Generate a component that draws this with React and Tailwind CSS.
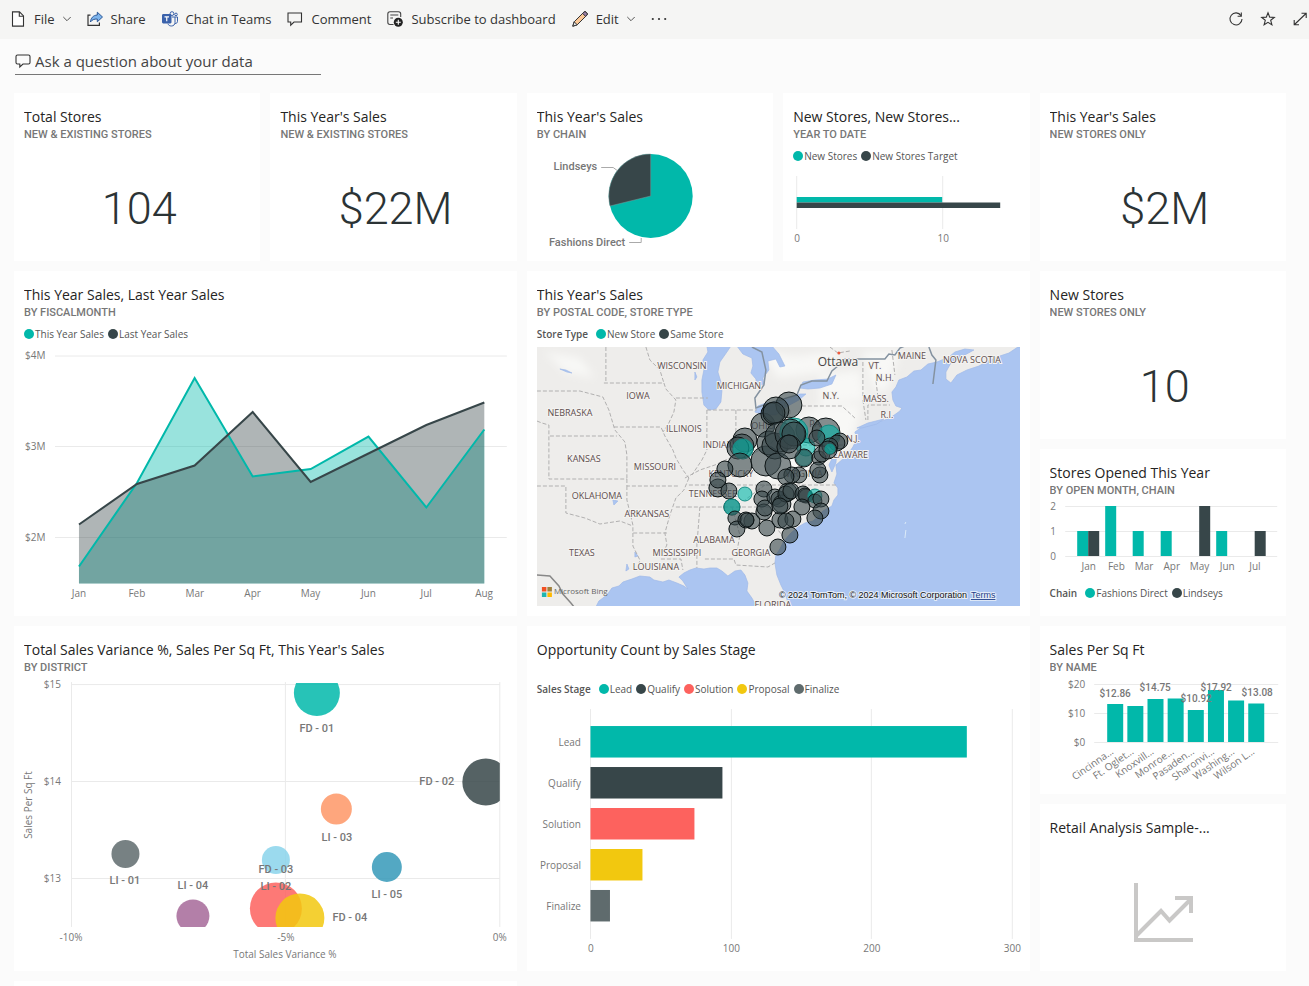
import React from "react";

const TEAL = "#01b8aa";
const SLATE = "#374649";
const CORAL = "#fd625e";
const GOLD = "#f2c80f";
const GRAPHITE = "#5f6b6d";

/* ---------- toolbar icons ---------- */

const FileIcon = () => (
  <svg className="h-4 w-4" viewBox="0 0 16 16" fill="#fff" stroke="#333" strokeWidth="1.1">
    <path d="M2.5 .9h7l4 4v10.2h-11z" />
    <path d="M9.3 .9v4.3h4.2" fill="none" />
  </svg>
);

const ShareIcon = () => (
  <svg className="h-4 w-4" viewBox="0 0 16 16">
    <path d="M3.500 4.200H1v10.200h11.400v-3" fill="none" stroke="#333" strokeWidth="1.2" />
    <path d="M10.300 1.200 15.500 6l-5.200 4.800V8C7.200 7.900 5 8.800 3.400 11 3.800 7.200 6 4.300 10.300 4z" fill="#7db4ec" stroke="#2b5797" strokeWidth="1" strokeLinejoin="round" />
  </svg>
);

const TeamsIcon = () => (
  <svg className="h-4 w-4" viewBox="0 0 16 16" fill="none" stroke="#3b62ab" strokeWidth="1">
    <circle cx="10" cy="2.600" r="1.900" />
    <circle cx="14" cy="3.400" r="1.300" />
    <path d="M10 6h3v5.500c0 2-1.400 3.500-3.600 3.500-1.700 0-2.900-.8-3.500-2.200" />
    <path d="M13 6h2.500v4.300c0 1.400-.9 2.200-2.500 2.200" />
    <rect x="0.500" y="3.500" width="8.500" height="8.500" rx=".5" fill="#3b62ab" />
    <path d="M2.500 5.800h4.500M4.750 5.800v4.400" stroke="#fff" strokeWidth="1.200" />
  </svg>
);

const CommentIcon = () => (
  <svg className="h-4 w-4" viewBox="0 0 16 16" fill="none" stroke="#333" strokeWidth="1.100">
    <path d="M1 2h13.500v9H7l-3.300 3.200V11H1z" />
  </svg>
);

const SubscribeIcon = () => (
  <svg className="h-4 w-4" viewBox="0 0 16 16" fill="none" stroke="#444" strokeWidth="1.100">
    <path d="M6.500 13.500H3A2.200 2.200 0 0 1 .8 11.300V3A2.200 2.200 0 0 1 3 .8h8.500A2.200 2.200 0 0 1 13.700 3v3" />
    <path d="M3.300 4h8M3.300 7H6" />
    <circle cx="11.300" cy="11.300" r="4.500" fill="#222" stroke="none" />
    <path d="M11.300 8.800v5M8.800 11.300h5" stroke="#fff" />
  </svg>
);

const PencilIcon = () => (
  <svg className="h-4 w-4" viewBox="0 0 16 16" stroke="#333" strokeWidth="1" strokeLinejoin="round">
    <path d="M.8 15.200 2.200 10.800 11.800 1.200a1.600 1.600 0 0 1 2.300 0l.7.7a1.600 1.600 0 0 1 0 2.300L5.200 13.800z" fill="#fbc898" />
    <path d="m10.600 2.400 1.200-1.200a1.600 1.600 0 0 1 2.300 0l.7.7a1.600 1.600 0 0 1 0 2.300l-1.200 1.200z" fill="#9a7fa5" />
    <path d="M.8 15.200 2.200 10.800l3 3z" fill="#eee" />
  </svg>
);

const Chevron = () => (
  <svg className="h-2 w-2" viewBox="0 0 8 8" fill="none" stroke="#555" strokeWidth="1">
    <path d="m.3 2 3.700 3.700L7.700 2" />
  </svg>
);

const MoreIcon = () => (
  <svg className="h-4 w-4" viewBox="0 0 16 16" fill="#333">
    <circle cx="1.800" cy="8" r="1.100" />
    <circle cx="8" cy="8" r="1.100" />
    <circle cx="14.200" cy="8" r="1.100" />
  </svg>
);

const RefreshIcon = () => (
  <svg className="h-4 w-4" viewBox="0 0 16 16" fill="none" stroke="#333" strokeWidth="1.100">
    <path d="M13 4.600A6 6 0 1 0 14 8" />
    <path d="M13.300 1.500v3.700H9.600" />
  </svg>
);

const StarIcon = () => (
  <svg className="h-4 w-4" viewBox="0 0 16 16" fill="none" stroke="#333" strokeWidth="1.100">
    <path d="m8 1.800 1.700 4.300 4.600.3-3.600 2.900 1.200 4.500L8 11.300l-3.900 2.500 1.200-4.500-3.600-2.900 4.600-.3z" />
  </svg>
);

const ExpandIcon = () => (
  <svg className="h-4 w-4" viewBox="0 0 16 16" fill="none" stroke="#333" strokeWidth="1.100">
    <path d="M2.500 13.500 14 2.500M9.500 2.300h4.700V7M2.200 9v4.700H7" />
  </svg>
);

const ToolButton = ({ icon, children, chevron }) => (
  <button type="button" className="flex items-center gap-2 whitespace-nowrap text-[13px] leading-5 text-[#333]">
    {icon}
    {children}
    {chevron && <Chevron />}
  </button>
);

const IconButton = ({ label, children }) => (
  <button type="button" aria-label={label}>
    {children}
  </button>
);

/* ---------- tile building blocks ---------- */

const Tile = ({ title, subtitle, className = "", children }) => (
  <section className={"flex min-w-0 flex-col overflow-hidden bg-white " + className}>
    <header className="h-12 shrink-0 px-[10px] pt-[14px]">
      <h2 className="truncate text-[14px] leading-5 text-[#252423]">{title}</h2>
      {subtitle && (
        <p className="truncate font-[Roboto] text-[11px] font-medium leading-4 text-[#777]">{subtitle}</p>
      )}
    </header>
    {children}
  </section>
);

const Kpi = ({ value }) => (
  <p className="flex flex-1 items-center justify-center pt-[14px] pl-1 font-[Roboto] text-[45px] font-light leading-none text-[#2b3335]">
    {value}
  </p>
);

const Legend = ({ name, items, className = "" }) => (
  <div className={"flex h-[22px] shrink-0 items-center gap-1 whitespace-nowrap px-[10px] text-[10px] text-[#555] " + className}>
    {name && <span className="mr-1 font-semibold">{name}</span>}
    {items.map(([label, color]) => (
      <span key={label} className="flex items-center gap-px">
        <svg className="h-[10px] w-[10px]" viewBox="0 0 10 10">
          <circle cx="5" cy="5" r="5" fill={color} />
        </svg>
        {label}
      </span>
    ))}
  </div>
);

const Chart = ({ box, label, children }) => (
  <svg
    className="block min-h-0 w-full flex-1 text-[10px]"
    viewBox={box}
    role="img"
    aria-label={label}
    fill="#777"
  >
    {children}
  </svg>
);

const Grid = ({ d }) => <path d={d} stroke="#eaeaea" fill="none" />;

/* ---------- charts ---------- */

const PieChart = () => (
  <Chart box="527 141 246 120" label="Sales by chain">
    <circle cx="650.500" cy="196" r="42" fill={TEAL} />
    <path d="M650.500 196V154A42 42 0 0 0 609.800 206z" fill={SLATE} stroke="#7d9a9a" strokeWidth=".5" />
    <path d="M601 167.500h12l4 3M629 242.500h12v-4.500" fill="none" stroke="#aaa" />
    <g className="font-[Roboto] text-[11px] font-medium" textAnchor="end">
      <text x="597" y="170">Lindseys</text>
      <text x="625" y="246">Fashions Direct</text>
    </g>
  </Chart>
);

const TargetChart = () => (
  <Chart box="783 167 246 94" label="New stores against target">
    <Grid d="M796.500 176v53M942.500 176v53" />
    <rect x="796.500" y="197" width="145.500" height="5.500" fill={TEAL} />
    <rect x="796.500" y="202.500" width="203.500" height="5.500" fill={SLATE} />
    <g textAnchor="middle">
      <text x="797" y="242">0</text>
      <text x="943" y="242">10</text>
    </g>
  </Chart>
);

const MONTHS = ["Jan", "Feb", "Mar", "Apr", "May", "Jun", "Jul", "Aug"];
const THIS_YEAR = "79,566.500 137,483 194.700,378 252.800,476.500 310.800,469 368.600,436.500 426.500,507.500 484.500,429.500";
const LAST_YEAR = "79,524.500 137,484 194.700,465.500 252.800,412 310.800,482 368.600,453.500 426.500,425 484.500,402.500";

const AreaChart = () => (
  <Chart box="14 345 503 271" label="Sales by fiscal month">
    <Grid d="M55 356h452M55 446.500h452M55 537.500h452" />
    <polygon points={THIS_YEAR + " 484.500,583.500 79,583.500"} fill={TEAL} fillOpacity=".4" />
    <polygon points={LAST_YEAR + " 484.500,583.500 79,583.500"} fill={SLATE} fillOpacity=".4" />
    <polyline points={THIS_YEAR} fill="none" stroke={TEAL} strokeWidth="2" />
    <polyline points={LAST_YEAR} fill="none" stroke={SLATE} strokeWidth="2" />
    <text x="25" y="359">$4M</text>
    <text x="25" y="450">$3M</text>
    <text x="25" y="541">$2M</text>
    <g textAnchor="middle">
      {MONTHS.map((m, i) => (
        <text key={m} x={79 + i * 57.9} y="597">{m}</text>
      ))}
    </g>
  </Chart>
);

const STATES = [
  ["WISCONSIN", 682, 369], ["MICHIGAN", 739, 389], ["IOWA", 638, 399], ["NEBRASKA", 570, 416],
  ["ILLINOIS", 684, 432], ["INDIANA", 721, 448], ["OHIO", 763, 429], ["KANSAS", 584, 462], ["MISSOURI", 655, 470],
  ["KENTUCKY", 731, 477], ["TENNESSEE", 713, 497], ["OKLAHOMA", 597, 499], ["ARKANSAS", 647, 517],
  ["ALABAMA", 714, 543], ["TEXAS", 582, 556], ["MISSISSIPPI", 677, 556], ["GEORGIA", 751, 556],
  ["LOUISIANA", 656, 570], ["FLORIDA", 773, 608], ["VIRGINIA", 804, 477], ["MAINE", 912, 359],
  ["NOVA SCOTIA", 972, 363], ["VT.", 875, 369], ["N.H.", 885, 381], ["N.Y.", 831, 399], ["MASS.", 876, 402],
  ["R.I.", 887, 418], ["N.J.", 853, 442], ["PA.", 816, 427], ["DELAWARE", 845, 458],
];

/* x, y, radius, and 1 for a new store */
const STORES = [
  [763, 425, 12], [772, 414, 11], [789, 405, 13], [776, 410, 13], [774, 413, 11], [745, 440, 12], [742, 446, 12],
  [738, 448, 11], [743, 449, 10, 1], [740, 465, 12], [725, 469, 8], [718, 488, 9], [718, 480, 8], [729, 491, 8],
  [745, 494, 7, 1], [732, 507, 8], [732, 507, 8, 1], [735, 518, 7], [737, 529, 8], [752, 521, 8], [746, 520, 8], [747, 520, 7],
  [766, 461, 15], [769, 443, 12], [775, 446, 13], [778, 466, 13], [780, 437, 15], [809, 430, 13], [806, 447, 9, 1],
  [804, 458, 8, 1], [804, 458, 9], [794, 432, 14, 1], [790, 434, 15], [794, 434, 12], [789, 447, 12], [789, 444, 9],
  [826, 432, 14], [829, 436, 11, 1], [819, 458, 7], [822, 454, 8], [817, 438, 8], [840, 441, 8], [837, 443, 8],
  [830, 446, 8], [828, 450, 9], [830, 449, 5, 1], [820, 475, 8], [818, 470, 8], [799, 475, 8], [792, 475, 8], [786, 477, 8],
  [764, 489, 8], [762, 499, 8], [764, 512, 8], [765, 508, 8], [767, 528, 8], [780, 520, 8],
  [775, 497, 8], [779, 499, 8], [782, 504, 9], [788, 492, 9], [786, 494, 8], [791, 491, 8], [780, 506, 8],
  [803, 494, 8], [806, 496, 7], [805, 495, 7], [815, 496, 7, 1], [815, 501, 7], [821, 499, 8], [802, 507, 8],
  [821, 511, 8], [815, 518, 8], [793, 519, 8], [786, 521, 8], [790, 535, 8], [778, 547, 8],
];

const StoreMap = () => (
  <svg
    className="mx-[10px] mb-[10px] mt-[2px] block min-h-0 flex-1"
    viewBox="537 347 483 259"
    preserveAspectRatio="xMidYMid slice"
    role="img"
    aria-label="Sales by postal code and store type"
  >
    <filter id="relief" x="-20%" y="-20%" width="140%" height="140%">
      <feGaussianBlur stdDeviation="4" />
    </filter>
    <rect x="517" y="337" width="523" height="279" fill="#eeedeb" />
    <g fill="#f8f8f6" filter="url(#relief)">
      <path d="M752 485l30-60 40-20 40 0-10 35-50 40zM862 352l38-2-12 40-14 2zM820 375l40-5 5 30-45 4z" />
      <path d="M545 352l35 6 15 20-30-6zM760 350l34 6 50-6-20 22-46 6z" />
    </g>
    <g fill="#abc5f1" stroke="#9fb9e8" strokeWidth=".7">
      <path d="M596 607 599 601 607 595 612 588 619 586 623 582 632 579 640 576 650 577 654 580 663 582 669 580 677 583 684 586 688 589 683 581 679 577 684 573 690 570 696 568 704 569 710 568 717 568 722 571 728 576 735 571 741 570 745 575 748 583 747 591 752 598 757 607z" />
      <path d="M789 607 786 595 781 585 777 575 775 563 776 555 780 549 784 541 791 533 798 527 805 523 813 521 818 517 823 511 832 506 834 500 838 495 838 488 834 483 837 474 836 465 843 459 848 454 853 447 857 439 855 432 862 427 874 423 885 420 893 416 900 411 902 408 896 406 893 400 892 392 896 387 899 380 907 377 914 371 921 370 928 364 937 362 942 360 949 357 955 352 965 349 974 350 963 356 951 363 946 372 946 379 951 383 957 375 967 370 979 366 988 361 1000 356 1009 353 1018 347 1025 347V607z" />
      <path d="M707 346 708 352 703 360 704 370 702 380 702 392 704 405 709 410 716 409 721 402 722 391 721 382 718 372 720 362 727 352 731 346z" />
      <path d="M737 346 743 354 752 358 753 366 751 373 756 379 757 386 764 384 763 378 769 370 768 361 776 359 780 367 785 366 779 354 772 346z" />
      <path d="M755 412 758 406 766 403 778 402 788 399 800 394 806 394 799 400 786 407 776 415 765 415z" />
      <path d="M800 388 803 382 815 380 828 379 836 375 832 384 820 388 808 389z" />
      <path d="M833 445 837 452 836 463 832 472 829 465 833 457z" />
      <path d="M857 428 868 423 884 419 877 424 862 428z" />
      <path d="M560 369l6 1 6 3-5-1zM613 500l5 1-4 4zM635 552l3 4-3 1zM627 564l2 5-3 2zM695 372l2 5-2 3z" />
    </g>
    <g fill="none" stroke="#b1b0b0" strokeDasharray="4 2" strokeWidth="1">
      <path d="M606 347V383M537 391H580L603 397 609 410 615 430 625 442 627 455V480M537 421 542 423 549 425V479H627M550 436H617M614 427H661L665 436 673 450 676 458 683 470 689 478M604 383H664L666 389 676 400 674 412 668 425 663 432M646 347 650 360 660 370 664 383" />
      <path d="M537 486H566V513L585 518 600 524 620 521 633 526M627 479V486H676L680 486M627 486V500L633 525V533H667M633 533V546L640 560 637 573M689 478 684 490 676 498 670 515 665 533 667 545 663 553M661 559H681L683 570M676 398H708M707 410V450L702 460 692 475M736 410V450M707 410H757M685 478 700 470 715 465 730 458M689 485H760M676 507H770M700 507 697 545V568M732 507 740 535 737 552M705 559H734L736 565 768 567 775 563M760 507 772 522 782 535M760 485H837M765 485 745 500" />
      <path d="M863 362V397M868 420V405H890M878 397 876 380M892 350 895 375M802 406H842L855 418M863 400 866 420M830 347 838 353 850 351M750 455 770 445 785 425V400M790 410V445H845M790 445 805 455 820 460" />
    </g>
    <path d="M752 347 762 352 766 370 764 385 755 398 756 408 767 404 797 395 801 385 812 381 827 381 832 371 838 366 845 359 860 359H885L889 354 895 355 900 348 905 346M929 347 932 355 936 360 933 384" fill="none" stroke="#8492a0" strokeWidth="1.500" />
    <path d="M537 575 550 576 559 586 563 594 571 603 575 608" fill="none" stroke="#888" strokeWidth="1.500" />
    <circle cx="839" cy="353" r="1.500" fill="#ef5a3c" />
    <path d="M905 524l1-2M905 538l1-8" stroke="#dcebf8" />
    <g className="text-[9px]" fill="#5d4d4d" stroke="#f4f3f1" strokeWidth="2" paintOrder="stroke" textAnchor="middle">
      {STATES.map(([name, x, y]) => (
        <text key={name} x={x} y={y}>{name}</text>
      ))}
      <text className="text-[12px]" x="838" y="366" fill="#444">Ottawa</text>
    </g>
    {STORES.map(([x, y, r, isNew], i) => (
      <circle
        key={i}
        cx={x}
        cy={y}
        r={r}
        fill={isNew ? TEAL : SLATE}
        fillOpacity="0.6"
        stroke={isNew ? "#178c84" : "#0d1415"}
        strokeWidth="1"
      />
    ))}
    <rect x="542" y="587" width="4.500" height="4.500" fill="#f25022" />
    <rect x="547.500" y="587" width="4.500" height="4.500" fill="#a0803c" />
    <rect x="542" y="592.500" width="4.500" height="4.500" fill="#1fb5b0" />
    <rect x="547.500" y="592.500" width="4.500" height="4.500" fill="#ffb900" />
    <text className="text-[8px]" x="554" y="594" fill="#666">Microsoft Bing</text>
    <g className="font-['Liberation_Sans'] text-[9px]" fill="#111" stroke="#e4ecf8" strokeWidth="2" paintOrder="stroke">
      <text x="779" y="598">© 2024 TomTom, © 2024 Microsoft Corporation</text>
      <a href="#terms">
        <text x="971" y="598" fill="#1d3f8a" textDecoration="underline">Terms</text>
      </a>
    </g>
  </svg>
);

const OpenedChart = () => (
  <Chart box="1040 497 246 85" label="Stores opened by month and chain">
    <Grid d="M1065 506.500h212M1065 531.500h212M1065 556.500h212" />
    {[[1077, 1, TEAL], [1088, 1, SLATE], [1105, 2, TEAL], [1132.5, 1, TEAL], [1160.5, 1, TEAL], [1199, 2, SLATE], [1216, 1, TEAL], [1254.5, 1, SLATE]].map(
      ([x, n, color]) => (
        <rect key={x} x={x} y={556 - n * 25} width="11" height={n * 25} fill={color} />
      )
    )}
    <text x="1050" y="510">2</text>
    <text x="1050" y="535">1</text>
    <text x="1050" y="560">0</text>
    <g textAnchor="middle">
      {MONTHS.slice(0, 7).map((m, i) => (
        <text key={m} x={1088.5 + i * 27.7} y="570">{m}</text>
      ))}
    </g>
  </Chart>
);

const DISTRICTS = [
  ["FD - 01", 317, 693, 23, TEAL, 317, 732],
  ["FD - 02", 486, 782, 23.5, SLATE, 437, 785],
  ["LI - 03", 336.5, 809, 15.5, "#fe9666", 337, 841],
  ["LI - 01", 125.5, 854, 14, GRAPHITE, 125, 884],
  ["LI - 02", 276, 860, 14, "#8ad4eb", 276, 890],
  ["LI - 05", 387, 867, 15, "#3599b8", 387, 898],
  ["LI - 04", 193, 916, 16.5, "#a66999", 193, 889],
  ["FD - 03", 276, 908.5, 26, CORAL, 276, 873],
  ["FD - 04", 300, 918, 24.5, GOLD, 350, 921],
];

const BubbleChart = () => (
  <Chart box="14 674 503 297" label="Variance and sales per square foot by district">
    <Grid d="M71 684.500h429M71 781.500h429M71 878.500h429M71.500 682v245M285.500 682v245M500 682v245" />
    <clipPath id="bubble-plot">
      <rect x="71" y="683" width="429" height="244" />
    </clipPath>
    <g clipPath="url(#bubble-plot)" fillOpacity=".85">
      {DISTRICTS.map(([name, x, y, r, color]) => (
        <circle key={name} cx={x} cy={y} r={r} fill={color} />
      ))}
    </g>
    <g className="font-[Roboto] text-[11px] font-medium" textAnchor="middle">
      {DISTRICTS.map(([name, , , , , x, y]) => (
        <text key={name} x={x} y={y}>{name}</text>
      ))}
    </g>
    <g textAnchor="end">
      <text x="61" y="688">$15</text>
      <text x="61" y="785">$14</text>
      <text x="61" y="882">$13</text>
    </g>
    <g textAnchor="middle">
      <text x="71" y="941">-10%</text>
      <text x="286" y="941">-5%</text>
      <text x="500" y="941">0%</text>
      <text x="285" y="958">Total Sales Variance %</text>
      <text transform="translate(32 805) rotate(-90)">Sales Per Sq Ft</text>
    </g>
  </Chart>
);

const STAGES = [["Lead", TEAL, 376.5], ["Qualify", SLATE, 132], ["Solution", CORAL, 104], ["Proposal", GOLD, 52], ["Finalize", GRAPHITE, 19.5]];

const StageChart = () => (
  <Chart box="527 700 503 271" label="Opportunity count by sales stage">
    <Grid d="M590.500 709v230M731.500 709v230M871.500 709v230M1012.500 709v230" />
    {STAGES.map(([name, color, width], i) => (
      <g key={name}>
        <rect x="590.500" y={726 + i * 41} width={width} height="31.5" fill={color} />
        <text x="581" y={746 + i * 41} textAnchor="end">{name}</text>
      </g>
    ))}
    <g textAnchor="middle">
      {[0, 100, 200, 300].map((n) => (
        <text key={n} x={591 + n * 1.405} y="952">{n}</text>
      ))}
    </g>
  </Chart>
);

const CITIES = [["Cincinna...", 38], ["Ft. Oglet...", 36], ["Knoxvill...", 43], ["Monroe...", 43.5], ["Pasaden...", 32], ["Sharonvi...", 52], ["Washing...", 41.5], ["Wilson L...", 38.5]];

const SqFtChart = () => (
  <Chart box="1040 674 246 120" label="Sales per square foot by name">
    <Grid d="M1094 684.500h184M1094 713.500h184M1094 742.500h184" />
    {CITIES.map(([name, h], i) => (
      <g key={name}>
        <rect x={1107 + i * 20.15} y={742 - h} width="16" height={h} fill={TEAL} />
        <text transform={`translate(${1114 + i * 20.15} 753) rotate(-35)`} textAnchor="end">{name}</text>
      </g>
    ))}
    <g textAnchor="end">
      <text x="1085" y="688">$20</text>
      <text x="1085" y="717">$10</text>
      <text x="1085" y="746">$0</text>
    </g>
    <g className="font-[Roboto] text-[10px] font-medium" textAnchor="middle">
      <text x="1115" y="697">$12.86</text>
      <text x="1155" y="691">$14.75</text>
      <text x="1196" y="702">$10.92</text>
      <text x="1216" y="691">$17.92</text>
      <text x="1257" y="696">$13.08</text>
    </g>
  </Chart>
);

const ReportMark = () => (
  <div className="flex flex-1 items-center justify-center pt-[2px]">
    <svg className="h-[60px] w-[60px]" viewBox="0 0 60 60" fill="none" stroke="#c9c8c7" strokeWidth="4">
      <path d="M3 0v57h57M3 53 28 28l8.500 9.500L57 17M42 15h16v15" />
    </svg>
  </div>
);

/* ---------- page ---------- */

export default function App() {
  return (
    <div className="flex h-screen flex-col overflow-hidden bg-[#fbfbfb] font-['Open_Sans','Noto_Sans',sans-serif]">
      <nav className="flex h-[39px] shrink-0 items-center justify-between bg-[#f5f5f4] pb-[2px] pl-[10px]">
        <div className="flex items-center gap-4">
          <ToolButton icon={<FileIcon />} chevron>File</ToolButton>
          <ToolButton icon={<ShareIcon />}>Share</ToolButton>
          <ToolButton icon={<TeamsIcon />}>Chat in Teams</ToolButton>
          <ToolButton icon={<CommentIcon />}>Comment</ToolButton>
          <ToolButton icon={<SubscribeIcon />}>Subscribe to dashboard</ToolButton>
          <ToolButton icon={<PencilIcon />} chevron>Edit</ToolButton>
          <IconButton label="More options"><MoreIcon /></IconButton>
        </div>
        <div className="flex items-center gap-4 pr-px">
          <IconButton label="Refresh"><RefreshIcon /></IconButton>
          <IconButton label="Favorite"><StarIcon /></IconButton>
          <IconButton label="Full screen"><ExpandIcon /></IconButton>
        </div>
      </nav>

      <div className="shrink-0 px-[15px] pb-[18px] pt-2">
        <label className="flex h-7 w-[306px] items-center gap-1 border-b border-[#777]">
          <svg className="h-4 w-4 shrink-0" viewBox="0 0 16 16" fill="none" stroke="#333" strokeWidth="1.100">
            <path d="M2.500 2h11a1.500 1.500 0 0 1 1.500 1.500v6a1.500 1.500 0 0 1-1.500 1.500H8l-3.200 3V11H2.500A1.500 1.500 0 0 1 1 9.500v-6A1.500 1.500 0 0 1 2.500 2z" />
          </svg>
          <input
            type="text"
            aria-label="Ask a question about your data"
            placeholder="Ask a question about your data"
            className="min-w-0 flex-1 bg-transparent text-[15px] leading-6 text-[#333] outline-none placeholder:text-[#444]"
          />
        </label>
      </div>

      <main className="grid shrink-0 grid-cols-5 grid-rows-[168px_168px_167px_168px_167px_168px] gap-[10px] pl-[14px] pr-[23px]">
        <Tile title="Total Stores" subtitle="NEW & EXISTING STORES"><Kpi value="104" /></Tile>
        <Tile title="This Year's Sales" subtitle="NEW & EXISTING STORES"><Kpi value="$22M" /></Tile>
        <Tile title="This Year's Sales" subtitle="BY CHAIN"><PieChart /></Tile>
        <Tile title="New Stores, New Stores..." subtitle="YEAR TO DATE">
          <Legend className="mt-1" items={[["New Stores", TEAL], ["New Stores Target", SLATE]]} />
          <TargetChart />
        </Tile>
        <Tile title="This Year's Sales" subtitle="NEW STORES ONLY"><Kpi value="$2M" /></Tile>

        <Tile className="col-span-2 row-span-2" title="This Year Sales, Last Year Sales" subtitle="BY FISCALMONTH">
          <Legend className="mt-1" items={[["This Year Sales", TEAL], ["Last Year Sales", SLATE]]} />
          <AreaChart />
        </Tile>
        <Tile className="col-span-2 row-span-2" title="This Year's Sales" subtitle="BY POSTAL CODE, STORE TYPE">
          <Legend className="mt-1" name="Store Type" items={[["New Store", TEAL], ["Same Store", SLATE]]} />
          <StoreMap />
        </Tile>
        <Tile title="New Stores" subtitle="NEW STORES ONLY"><Kpi value="10" /></Tile>
        <Tile title="Stores Opened This Year" subtitle="BY OPEN MONTH, CHAIN">
          <OpenedChart />
          <Legend className="mb-3" name="Chain" items={[["Fashions Direct", TEAL], ["Lindseys", SLATE]]} />
        </Tile>

        <Tile className="col-span-2 row-span-2" title="Total Sales Variance %, Sales Per Sq Ft, This Year's Sales" subtitle="BY DISTRICT">
          <BubbleChart />
        </Tile>
        <Tile className="col-span-2 row-span-2" title="Opportunity Count by Sales Stage">
          <Legend className="mt-1" name="Sales Stage" items={STAGES.map(([name, color]) => [name, color])} />
          <StageChart />
        </Tile>
        <Tile title="Sales Per Sq Ft" subtitle="BY NAME"><SqFtChart /></Tile>
        <Tile title="Retail Analysis Sample-..."><ReportMark /></Tile>

        <section className="col-span-2 bg-white" />
      </main>
    </div>
  );
}
